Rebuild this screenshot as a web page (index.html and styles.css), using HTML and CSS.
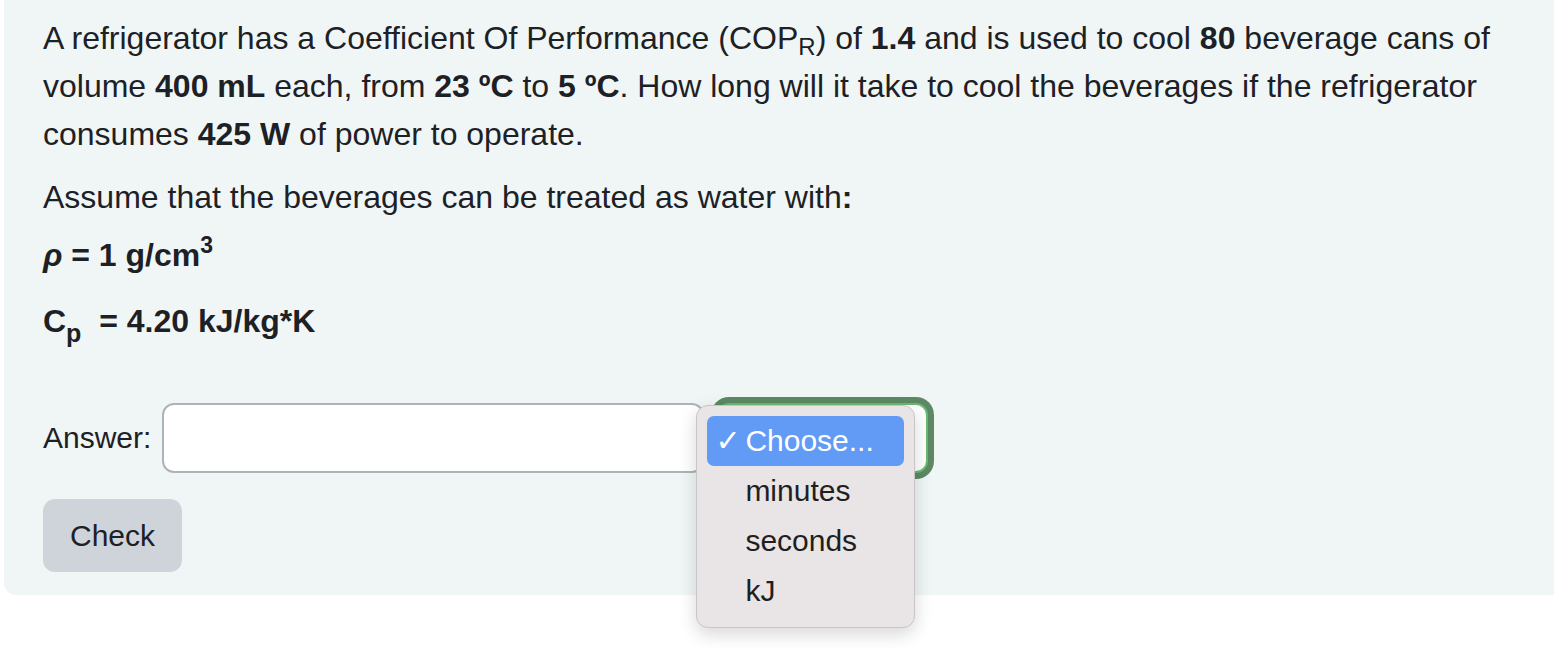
FILE: index.html
```html
<!DOCTYPE html>
<html lang="en">
<head>
    <meta charset="UTF-8">
    <meta name="viewport" content="width=device-width, initial-scale=1.0">
    <title>Quiz question</title>
    <link rel="stylesheet" href="styles.css">
</head>
<body>
    <div class="que">
        <div class="qtext">
            <p>A refrigerator has a Coefficient Of Performance (COP<sub>R</sub>) of <b>1.4</b> and is used to cool <b>80</b> beverage cans of volume <b>400 mL</b> each, from <b>23 ºC</b> to <b>5 ºC</b>. How long will it take to cool the beverages if the refrigerator consumes <b>425 W</b> of power to operate.</p>
            <p class="assume">Assume that the beverages can be treated as water with<b>:</b></p>
            <p class="formula rho"><b><i>ρ</i> = 1 g/cm<sup>3</sup></b></p>
            <p class="formula cp"><b>C<sub>p</sub>&nbsp; = 4.20 kJ/kg*K</b></p>
        </div>

        <div class="ablock">
            <label class="answer-label" for="answer">Answer:</label>
            <input type="text" id="answer" class="answer-field">
            <div class="unit-select">
                <div class="select-box"></div>
                <ul class="select-menu">
                    <li class="selected"><span class="tick">✓</span>Choose...</li>
                    <li>minutes</li>
                    <li>seconds</li>
                    <li>kJ</li>
                </ul>
            </div>
        </div>

        <button type="button" class="check-btn">Check</button>
    </div>
</body>
</html>
```

FILE: styles.css
```css
* {
    margin: 0;
    padding: 0;
    box-sizing: border-box;
}

body {
    font-family: "Liberation Sans", Arial, Helvetica, sans-serif;
    font-size: 30px;
    color: #1d2125;
    background: #ffffff;
    min-height: 100vh;
}

.que {
    margin-left: 4px;
    background: #f0f6f6;
    border-radius: 0 0 0 12px;
    padding: 14px 39px 23px 39px;
}

.qtext {
    font-size: 32px;
}

.qtext p {
    line-height: 48px;
    margin-bottom: 15px;
}

.qtext p.assume {
    margin-bottom: 10px;
}

.qtext sub {
    font-size: 24px;
    line-height: 0;
    vertical-align: -6px;
}

.qtext sup {
    font-size: 23px;
    line-height: 0;
    vertical-align: 13px;
}

.formula.rho {
    margin-bottom: 18px;
}

.formula.cp sub {
    font-size: 25px;
    vertical-align: -10px;
}

.ablock {
    display: flex;
    align-items: center;
    margin-top: 58px;
}

.answer-label {
    margin-right: 11px;
}

.answer-field {
    width: 542px;
    height: 70px;
    border: 2px solid #aeb3ba;
    border-radius: 12px;
    background: #ffffff;
    font-family: inherit;
    font-size: 30px;
    padding: 0 16px;
    outline: none;
}

.unit-select {
    position: relative;
    margin-left: 13px;
}

.select-box {
    width: 211px;
    height: 70px;
    border: 2px solid #6bb872;
    border-radius: 12px;
    background: #ffffff;
    box-shadow: 0 0 0 6px #5c8964;
}

.select-menu {
    position: absolute;
    left: -21px;
    top: 2px;
    width: 219px;
    list-style: none;
    padding: 10px 10px 11px;
    background: #e9e4e5;
    border: 1px solid #c9c5c6;
    border-radius: 12px;
    box-shadow: 0 6px 18px rgba(0, 0, 0, 0.16);
    z-index: 2;
}

.select-menu li {
    position: relative;
    height: 50px;
    line-height: 49px;
    padding-left: 38px;
    font-size: 30px;
    color: #1f1f1f;
    border-radius: 7px;
}

.select-menu li.selected {
    background: #619bf6;
    color: #ffffff;
}

.tick {
    position: absolute;
    left: 8px;
    font-size: 30px;
    font-weight: bold;
    font-family: "DejaVu Sans", sans-serif;
}

.check-btn {
    display: block;
    margin-top: 26px;
    width: 139px;
    height: 73px;
    border: none;
    border-radius: 12px;
    background: #ced4da;
    color: #1d2125;
    font-family: inherit;
    font-size: 30px;
}
```
